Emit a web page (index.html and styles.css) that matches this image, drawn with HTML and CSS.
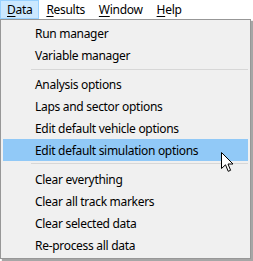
FILE: index.html
```html
<!DOCTYPE html>
<html>
<head>
<meta charset="utf-8">
<link rel="stylesheet" href="styles.css">
</head>
<body>
<div class="menubar">
  <div class="bar-item active"><u>D</u>ata</div>
  <div class="bar-item"><u>R</u>esults</div>
  <div class="bar-item"><u>W</u>indow</div>
  <div class="bar-item"><u>H</u>elp</div>
</div>
<div class="menu">
  <div class="item">Run manager</div>
  <div class="item">Variable manager</div>
  <div class="sep"></div>
  <div class="item">Analysis options</div>
  <div class="item">Laps and sector options</div>
  <div class="item">Edit default vehicle options</div>
  <div class="item hover">Edit default simulation options</div>
  <div class="sep sep2"></div>
  <div class="item">Clear everything</div>
  <div class="item">Clear all track markers</div>
  <div class="item">Clear selected data</div>
  <div class="item">Re-process all data</div>
</div>
<svg class="cursor" width="13" height="21" viewBox="0 0 13 21">
  <path d="M0.5 0.5 L0.5 16.5 L4.5 12.8 L7.2 19.3 L9.6 18.3 L7 12 L12 12 Z" fill="#fff" stroke="#000" stroke-width="1" stroke-linejoin="miter"/>
</svg>
</body>
</html>
```

FILE: styles.css
```css
html, body {
  margin: 0;
  padding: 0;
  background: #ffffff;
}
body {
  font-family: "Noto Sans", "Open Sans", sans-serif;
  font-size: 12px;
  letter-spacing: -0.3px;
  color: #000;
  width: 253px;
  height: 261px;
  overflow: hidden;
  position: relative;
}
.menubar {
  display: flex;
  height: 19px;
  background: #fff;
}
.bar-item {
  box-sizing: border-box;
  height: 19px;
  line-height: 17px;
  padding: 0 6px 0 6px;
  border: 1px solid transparent;
}
.bar-item.active {
  background: #cce8ff;
  border-color: #99d1ff;
}
.bar-item u {
  text-decoration-thickness: 1px;
  text-underline-offset: 2px;
}
.menu {
  box-sizing: border-box;
  width: 251px;
  height: 240px;
  border: 1px solid #979797;
  background: #f0f0f0;
  padding: 2px 2px;
  box-shadow: 2px 2px 1px rgba(0, 0, 0, 0.35);
  display: flex;
  flex-direction: column;
}
.item {
  height: 21px;
  line-height: 21px;
  padding-top: 1px;
  padding-left: 32px;
  white-space: nowrap;
  flex: none;
}
.item.hover {
  background: #91c9f7;
}
.sep {
  height: 7px;
  flex: none;
  margin-left: 28px;
  margin-right: 0;
  position: relative;
}
.sep::before {
  content: "";
  display: block;
  margin-top: 3px;
  height: 1px;
  background: #d7d7d7;
}
.sep2::before {
  margin-top: 2px;
}
.cursor {
  position: absolute;
  left: 221px;
  top: 152px;
}
```
